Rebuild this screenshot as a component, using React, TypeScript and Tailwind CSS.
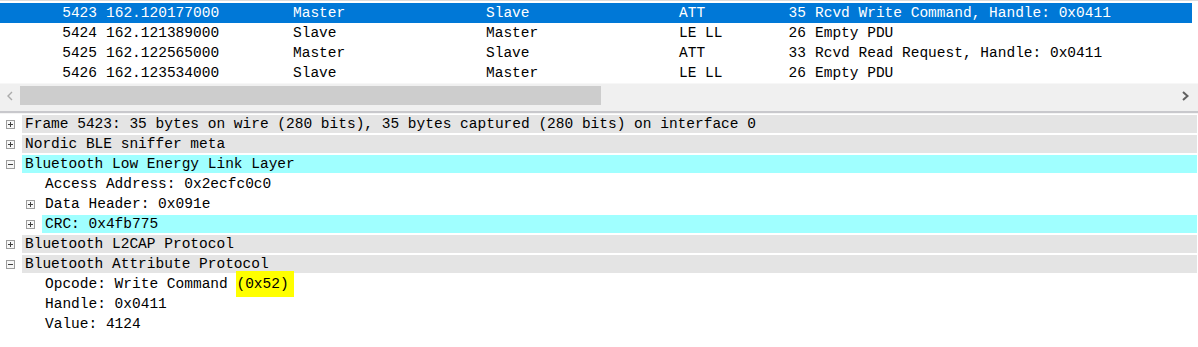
import React from "react";

type Packet = {
  no: string;
  time: string;
  src: string;
  dst: string;
  proto: string;
  len: string;
  info: string;
  sel?: boolean;
};

const packets: Packet[] = [
  { no: "5423", time: "162.120177000", src: "Master", dst: "Slave", proto: "ATT", len: "35", info: "Rcvd Write Command, Handle: 0x0411", sel: true },
  { no: "5424", time: "162.121389000", src: "Slave", dst: "Master", proto: "LE LL", len: "26", info: "Empty PDU" },
  { no: "5425", time: "162.122565000", src: "Master", dst: "Slave", proto: "ATT", len: "33", info: "Rcvd Read Request, Handle: 0x0411" },
  { no: "5426", time: "162.123534000", src: "Slave", dst: "Master", proto: "LE LL", len: "26", info: "Empty PDU" },
];

function ExpandBox({ open }: { open: boolean }) {
  return (
    <svg width="9" height="9" viewBox="0 0 9 9" className="shrink-0">
      <rect x="0.5" y="0.5" width="8" height="8" fill="#f7f7f7" stroke="#9c9c9c" />
      <line x1="2" y1="4.5" x2="7" y2="4.5" stroke="#3f3f3f" />
      {!open && <line x1="4.5" y1="2" x2="4.5" y2="7" stroke="#3f3f3f" />}
    </svg>
  );
}

type TreeRowProps = {
  level: 0 | 1;
  box?: "open" | "closed";
  bg?: string;
  children: React.ReactNode;
};

function TreeRow({ level, box, bg, children }: TreeRowProps) {
  const lead =
    level === 0 ? "pl-[6px]" : box ? "pl-[26px]" : "pl-[42px]";
  return (
    <div className={`flex h-[20px] items-center pr-[1px] ${lead}`}>
      {box && (
        <>
          <ExpandBox open={box === "open"} />
          <div className="w-[7px] shrink-0" />
        </>
      )}
      <div className={`flex h-[18px] flex-1 items-center whitespace-pre pl-[3px] ${bg ?? ""}`}>
        {children}
      </div>
    </div>
  );
}

export default function App() {
  return (
    <div className="w-[1198px] h-[347px] overflow-hidden bg-white text-[14.5px] leading-[20px] text-black font-[family-name:'Liberation_Mono',monospace]">
      {/* packet list */}
      <div className="h-[1px] bg-[#dcdcdc]" />
      <div className="h-[2px]" />
      <div className="w-[1192px]">
        {packets.map((p) => (
          <div
            key={p.no}
            className={`flex h-[20px] items-center whitespace-pre ${p.sel ? "bg-[#0078d7] text-white" : "text-black"}`}
          >
            <div className="w-[97px] shrink-0 text-right">{p.no}</div>
            <div className="ml-[9px] w-[187px] shrink-0">{p.time}</div>
            <div className="w-[193px] shrink-0">{p.src}</div>
            <div className="w-[193px] shrink-0">{p.dst}</div>
            <div className="w-[97px] shrink-0">{p.proto}</div>
            <div className="w-[30px] shrink-0 text-right">{p.len}</div>
            <div className="ml-[9px]">{p.info}</div>
          </div>
        ))}
      </div>
      <div className="h-[1px] bg-[#f7f7f7]" />

      {/* horizontal scrollbar */}
      <div className="flex h-[23px] items-center bg-[#f0f0f0]">
        <div className="flex w-[20px] shrink-0 justify-center">
          <svg width="8" height="10" viewBox="0 0 8 10">
            <polyline points="6,1 2,5 6,9" fill="none" stroke="#ababab" strokeWidth="1.4" />
          </svg>
        </div>
        <div className="h-[19px] w-[581px] shrink-0 bg-[#cdcdcd]" />
        <div className="flex-1" />
        <div className="flex w-[26px] shrink-0 justify-center">
          <svg width="9" height="10" viewBox="0 0 9 10">
            <polyline points="2,1 6.5,5 2,9" fill="none" stroke="#606060" strokeWidth="2" />
          </svg>
        </div>
      </div>
      <div className="h-[4px] bg-[#f0f0f0]" />
      <div className="h-[2px] bg-[#c8c8cc]" />
      <div className="h-[1px] bg-[#f4f4f4]" />

      {/* packet details tree */}
      <div>
        <TreeRow level={0} box="closed" bg="bg-[#e4e4e4]">
          Frame 5423: 35 bytes on wire (280 bits), 35 bytes captured (280 bits) on interface 0
        </TreeRow>
        <TreeRow level={0} box="closed" bg="bg-[#e4e4e4]">
          Nordic BLE sniffer meta
        </TreeRow>
        <TreeRow level={0} box="open" bg="bg-[#a0ffff]">
          Bluetooth Low Energy Link Layer
        </TreeRow>
        <TreeRow level={1}>Access Address: 0x2ecfc0c0</TreeRow>
        <TreeRow level={1} box="closed">
          Data Header: 0x091e
        </TreeRow>
        <TreeRow level={1} box="closed" bg="bg-[#a0ffff]">
          CRC: 0x4fb775
        </TreeRow>
        <TreeRow level={0} box="closed" bg="bg-[#e4e4e4]">
          Bluetooth L2CAP Protocol
        </TreeRow>
        <TreeRow level={0} box="open" bg="bg-[#e4e4e4]">
          Bluetooth Attribute Protocol
        </TreeRow>
        <TreeRow level={1}>
          {"Opcode: Write Command "}
          <span className="bg-[#ffff00] py-[3px] pr-[5px]">(0x52)</span>
        </TreeRow>
        <TreeRow level={1}>Handle: 0x0411</TreeRow>
        <TreeRow level={1}>Value: 4124</TreeRow>
      </div>
    </div>
  );
}
